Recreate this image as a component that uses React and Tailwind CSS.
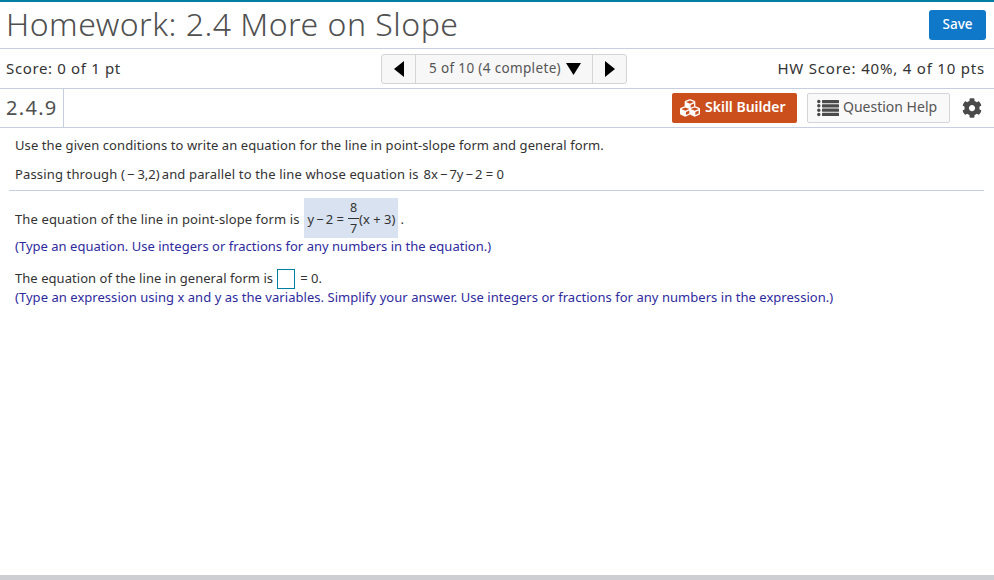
import React from "react";
import { FaCubes, FaCog } from "react-icons/fa";

function ListIcon() {
  return (
    <svg width="22" height="18" viewBox="0 0 22 18" className="shrink-0" fill="#4a4a4a">
      <circle cx="1.8" cy="2.5" r="1.7" />
      <circle cx="1.8" cy="6.8" r="1.7" />
      <circle cx="1.8" cy="11.2" r="1.7" />
      <circle cx="1.8" cy="15.5" r="1.7" />
      <rect x="5" y="1" width="17" height="3.2" rx="0.6" />
      <rect x="5" y="5.2" width="17" height="3.2" rx="0.6" />
      <rect x="5" y="9.6" width="17" height="3.2" rx="0.6" />
      <rect x="5" y="13.8" width="17" height="3.2" rx="0.6" />
    </svg>
  );
}

function Tri({ points, w, h }) {
  return (
    <svg width={w} height={h} viewBox={`0 0 ${w} ${h}`} className="shrink-0" fill="#000">
      <polygon points={points} />
    </svg>
  );
}

export default function App() {
  return (
    <div className="w-[994px] h-[580px] flex flex-col bg-white overflow-hidden font-['Noto_Sans',sans-serif] text-[#333]">
      <header className="h-[49px] shrink-0 border-t-2 border-b border-t-[#007fa3] border-b-[#c7cfdf] flex items-center justify-between pl-[6px] pr-[8px]">
        <h1 className="text-[32px] leading-none font-light tracking-[0.5px] text-[#505050] whitespace-nowrap -mt-[2px]">Homework: 2.4 More on Slope</h1>
        <button className="w-[57px] h-[30px] rounded-[3px] bg-[#0f78c9] text-white text-[13.5px] font-medium pb-[2px]">Save</button>
      </header>

      <div className="h-[40px] shrink-0 border-b border-[#c7cfdf] grid grid-cols-[375px_246px_1fr] items-center pl-[6px] pr-[9px]">
        <div className="text-[15px] tracking-[0.65px] text-[#333] whitespace-nowrap">Score: 0 of 1 pt</div>
        <div className="h-[30px] flex rounded-[3px] border border-[#d4d4d4] bg-[#f7f7f7]">
          <div className="w-[34px] flex items-center justify-center border-r border-[#d4d4d4]"><Tri w={10} h={16} points="10,0 10,16 0,8" /></div>
          <div className="flex-1 flex items-center pl-[13px] gap-[5px] text-[13.5px] tracking-[0.35px] text-[#555] whitespace-nowrap">
            5 of 10 (4 complete)<Tri w={15} h={12} points="0,0 15,0 7.5,12" />
          </div>
          <div className="w-[34px] flex items-center justify-center border-l border-[#d4d4d4]"><Tri w={10} h={16} points="0,0 10,8 0,16" /></div>
        </div>
        <div className="text-[15px] tracking-[0.8px] text-[#333] text-right whitespace-nowrap">HW Score: 40%, 4 of 10 pts</div>
      </div>

      <div className="h-[39px] shrink-0 border-b border-[#c7cfdf] flex items-stretch pr-[12px]">
        <div className="w-[64px] border-r border-[#c7cfdf] pl-[6px] flex items-center text-[20px] tracking-[1.3px] text-[#505050]">2.4.9</div>
        <div className="flex-1 flex items-center justify-end gap-[10px]">
          <button className="h-[30px] w-[125px] rounded-[2px] bg-[#cb4f1d] text-white text-[14px] font-semibold flex items-center pl-[8px] gap-[5px] whitespace-nowrap">
            <FaCubes className="text-[20px]" /><span className="-mt-[3px]">Skill Builder</span>
          </button>
          <button className="h-[30px] w-[143px] rounded-[2px] border border-[#d4d4d4] bg-[#f9f9f9] text-[#555] text-[14px] flex items-center pl-[9px] gap-[4px] whitespace-nowrap">
            <ListIcon /><span className="-mt-[3px]">Question Help</span>
          </button>
          <FaCog className="text-[#4a4a4a] text-[20px] ml-[2px]" />
        </div>
      </div>

      <main className="flex-1 pl-[15px] pr-[10px] pt-[8px] text-[13px] text-[#333] whitespace-nowrap">
        <p className="h-[18px] leading-[18px] tracking-[0.085px]">Use the given conditions to write an equation for the line in point-slope form and general form.</p>
        <p className="h-[18px] leading-[18px] mt-[11px] flex">
          <span className="tracking-[0.15px]">Passing through (</span>
          <span className="ml-[2px]">−</span>
          <span className="ml-[3px] mr-[2px]">3,2)</span>
          <span className="tracking-[0.15px]">and parallel to the line whose equation is</span>
          <span className="ml-[5px]">8x<span className="mx-[2px]">−</span>7y<span className="mx-[2px]">−</span>2 = 0</span>
        </p>
        <div className="h-px bg-[#c7cfdf] -ml-[6px] mt-[7px]" />
        <div className="flex items-center mt-[7px] h-[40px]">
          <span className="tracking-[0.13px] pt-[4px]">The equation of the line in point-slope form is</span>
          <span className="ml-[4px] h-[40px] w-[94px] bg-[#d8e2f0] pl-[4px] pt-[4px] flex items-center">
            <span>y<span className="mx-[2px]">−</span>2 =</span>
            <span className="inline-flex flex-col items-center ml-[4px] text-[12.5px] leading-[20px] -mt-[4px]">
              <span className="px-[2px] border-b border-[#333]">8</span>
              <span>7</span>
            </span>
            <span>(x + 3)</span>
          </span>
          <span className="ml-[3px] pt-[4px]">.</span>
        </div>
        <p className="h-[18px] leading-[18px] -mt-[1px] tracking-[0.015px] text-[#2e2a9e]">(Type an equation. Use integers or fractions for any numbers in the equation.)</p>
        <div className="flex items-center h-[20px] mt-[14px]">
          <span className="tracking-[0.05px]">The equation of the line in general form is</span>
          <span className="ml-[4px] w-[18px] h-[20px] border border-[#007fa3] bg-white" />
          <span className="ml-[5px]">= 0.</span>
        </div>
        <p className="h-[18px] leading-[18px] -mt-[1px] tracking-[0.04px] text-[#2e2a9e]">(Type an expression using x and y as the variables. Simplify your answer. Use integers or fractions for any numbers in the expression.)</p>
      </main>

      <div className="h-[5px] shrink-0 bg-[#cdced4]" />
    </div>
  );
}
